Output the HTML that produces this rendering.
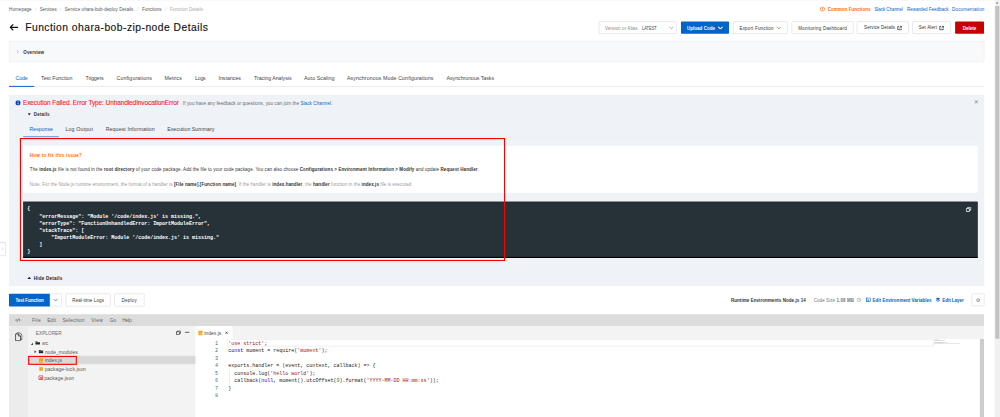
<!DOCTYPE html>
<html lang="en"><head><meta charset="utf-8"><title>Function Details</title>
<style>
html,body{margin:0;padding:0;background:#fff;overflow:hidden}
body{width:1000px;height:417px;position:relative;font-family:"Liberation Sans",sans-serif;color:#333}
#s{position:absolute;left:0;top:0;width:2667px;height:1112px;transform:scale(.375);transform-origin:0 0;overflow:hidden}
.t{position:absolute;white-space:pre;line-height:1;margin:0}
.m{font-family:"Liberation Mono",monospace}
.b{position:absolute;box-sizing:border-box;display:block}
b{font-weight:700}
.d{color:#333}
</style></head><body><div id="s">
<div class="b" style="left:0.00px;top:0.00px;width:2651.73px;height:3.20px;background:linear-gradient(#f3f3f3,#fff);"></div>
<svg class="b" style="left:24.53px;top:62.93px;width:24.53px;height:19.73px;" viewBox="0 0 25 20" preserveAspectRatio="none"><path d="M2.5 10 H24 M10.5 2 L2.5 10 L10.5 18" fill="none" stroke="#111" stroke-width="3.1"/></svg>
<svg class="b" style="left:2185.60px;top:16.80px;width:14.40px;height:14.40px;" viewBox="0 0 16 16" preserveAspectRatio="none"><circle cx="8" cy="8" r="6.3" fill="none" stroke="#ff6a00" stroke-width="2"/><path d="M8 4 V9.2 M8 10.6 V12.2" stroke="#ff6a00" stroke-width="2"/></svg>
<div class="b" style="left:1597.07px;top:56.80px;width:208.00px;height:32.80px;background:#fff;border:1px solid #c0c6cc;border-radius:2px;"></div>
<svg class="b" style="left:1783.73px;top:70.03px;width:12.80px;height:7.68px;" viewBox="0 0 16 8" preserveAspectRatio="none"><path d="M1 1 L8 7 L15 1" fill="none" stroke="#888" stroke-width="2.0"/></svg>
<div class="b" style="left:1816.00px;top:56.80px;width:128.00px;height:32.80px;background:#0064c8;border-radius:2px;"></div>
<svg class="b" style="left:1913.87px;top:69.63px;width:14.13px;height:8.48px;" viewBox="0 0 16 8" preserveAspectRatio="none"><path d="M1 1 L8 7 L15 1" fill="none" stroke="#fff" stroke-width="2.8"/></svg>
<div class="b" style="left:1954.67px;top:56.80px;width:145.33px;height:32.80px;background:#fff;border:1px solid #c0c6cc;border-radius:2px;"></div>
<svg class="b" style="left:2069.87px;top:69.87px;width:13.33px;height:8.00px;" viewBox="0 0 16 8" preserveAspectRatio="none"><path d="M1 1 L8 7 L15 1" fill="none" stroke="#666" stroke-width="2.0"/></svg>
<div class="b" style="left:2110.67px;top:56.80px;width:165.33px;height:32.80px;background:#fff;border:1px solid #c0c6cc;border-radius:2px;"></div>
<div class="b" style="left:2285.33px;top:56.80px;width:137.60px;height:32.80px;background:#fff;border:1px solid #c0c6cc;border-radius:2px;"></div>
<svg class="b" style="left:2391.87px;top:67.73px;width:13.60px;height:13.60px;" viewBox="0 0 16 16" preserveAspectRatio="none"><path d="M6.5 2.5 H2.5 V13.5 H13.5 V9.5" fill="none" stroke="#222" stroke-width="2.3"/><path d="M7.5 8.5 L13 3 M9 2 H14 V7" fill="none" stroke="#222" stroke-width="2.3"/></svg>
<div class="b" style="left:2432.53px;top:56.80px;width:102.40px;height:32.80px;background:#fff;border:1px solid #c0c6cc;border-radius:2px;"></div>
<svg class="b" style="left:2504.40px;top:67.73px;width:13.60px;height:13.60px;" viewBox="0 0 16 16" preserveAspectRatio="none"><path d="M6.5 2.5 H2.5 V13.5 H13.5 V9.5" fill="none" stroke="#222" stroke-width="2.3"/><path d="M7.5 8.5 L13 3 M9 2 H14 V7" fill="none" stroke="#222" stroke-width="2.3"/></svg>
<div class="b" style="left:2546.67px;top:56.80px;width:77.60px;height:32.80px;background:#c80000;border-radius:2px;"></div>
<div class="b" style="left:24.27px;top:108.80px;width:2600.80px;height:56.27px;background:#f7f9fa;border:1px solid #e3e4e6;border-radius:2px;"></div>
<svg class="b" style="left:45.07px;top:132.80px;width:5.33px;height:9.60px;" viewBox="0 0 8 16" preserveAspectRatio="none"><path d="M1.2 1.5 L6.5 8 L1.2 14.5" fill="none" stroke="#555" stroke-width="1.9"/></svg>
<div class="b" style="left:24.27px;top:230.40px;width:2600.80px;height:1.33px;background:#e3e4e6;"></div>
<div class="b" style="left:24.27px;top:228.80px;width:67.20px;height:2.93px;background:#2473d2;"></div>
<div class="b" style="left:24.27px;top:252.53px;width:2600.80px;height:510.13px;background:#eff3f8;"></div>
<svg class="b" style="left:40.80px;top:267.20px;width:14.13px;height:14.13px;" viewBox="0 0 16 16" preserveAspectRatio="none"><circle cx="8" cy="8" r="8" fill="#0a3ac4"/><path d="M8 3.4 V5.6 M8 7.2 V12.8" stroke="#fff" stroke-width="2.6"/></svg>
<svg class="b" style="left:2598.13px;top:266.40px;width:11.20px;height:11.20px;" viewBox="0 0 16 16" preserveAspectRatio="none"><path d="M2 2 L14 14 M14 2 L2 14" stroke="#444" stroke-width="2"/></svg>
<div class="b" style="left:74.1px;top:302.1px;width:0;height:0;border-left:4.6px solid transparent;border-right:4.6px solid transparent;border-top:6.5px solid #222"></div>
<div class="b" style="left:61.87px;top:365.33px;width:2544.80px;height:1.07px;background:#e3e7ec;"></div>
<div class="b" style="left:61.87px;top:362.93px;width:95.47px;height:3.47px;background:#6a9ee2;"></div>
<div class="b" style="left:61.87px;top:388.53px;width:2544.80px;height:125.60px;background:#fff;"></div>
<div class="b" style="left:61.87px;top:538.40px;width:2544.80px;height:149.33px;background:#263238;border:1.6px solid #0a0d0f;"></div>
<div class="b" style="left:61.87px;top:685.07px;width:2544.80px;height:2.67px;background:#000;"></div>
<svg class="b" style="left:2575.20px;top:550.93px;width:15.47px;height:14.93px;" viewBox="0 0 16 16" preserveAspectRatio="none"><rect x="1.8" y="5.5" width="8.7" height="8.7" rx="1" fill="none" stroke="#fff" stroke-width="2.3"/><path d="M5.5 5 V2.5 Q5.5 1.8 6.2 1.8 H13.5 Q14.2 1.8 14.2 2.5 V9.8 Q14.2 10.5 13.5 10.5 H11" fill="none" stroke="#fff" stroke-width="2.3"/></svg>
<div class="b" style="left:53.33px;top:368.00px;width:1293.60px;height:328.00px;border:3.4px solid #f00;"></div>
<div class="b" style="left:73.3px;top:738.4px;width:0;height:0;border-left:5px solid transparent;border-right:5px solid transparent;border-bottom:6.5px solid #222"></div>
<div class="b" style="left:-2.67px;top:646.67px;width:17.33px;height:34.93px;background:#fff;border:1.5px solid #d5d8dc;border-radius:0 3px 3px 0;box-shadow:0 0 3px rgba(0,0,0,.12);"></div>
<svg class="b" style="left:3.20px;top:658.13px;width:7.20px;height:11.47px;" viewBox="0 0 8 16" preserveAspectRatio="none"><path d="M1.2 1.2 L6.6 8 L1.2 14.8" fill="none" stroke="#bfc2c8" stroke-width="1.7"/></svg>
<div class="b" style="left:24.27px;top:783.47px;width:109.07px;height:33.33px;background:#0064c8;border-radius:2px 0 0 2px;"></div>
<div class="b" style="left:132.80px;top:783.47px;width:32.00px;height:33.33px;background:#fff;border:1px solid #c0c6cc;border-radius:0 2px 2px 0;"></div>
<svg class="b" style="left:142.40px;top:795.76px;width:12.80px;height:7.68px;" viewBox="0 0 16 8" preserveAspectRatio="none"><path d="M1 1 L8 7 L15 1" fill="none" stroke="#555" stroke-width="2.0"/></svg>
<div class="b" style="left:175.20px;top:783.47px;width:120.00px;height:33.33px;background:#fff;border:1px solid #c0c6cc;border-radius:2px;"></div>
<div class="b" style="left:304.53px;top:783.47px;width:80.80px;height:33.33px;background:#fff;border:1px solid #c0c6cc;border-radius:2px;"></div>
<svg class="b" style="left:2284.00px;top:793.33px;width:12.53px;height:12.53px;" viewBox="0 0 16 16" preserveAspectRatio="none"><circle cx="8" cy="8" r="6.3" fill="none" stroke="#909090" stroke-width="1.9"/><path d="M8 4.5 V8.5 H11" fill="none" stroke="#9a9a9a" stroke-width="1.8"/></svg>
<svg class="b" style="left:2308.80px;top:792.53px;width:13.07px;height:12.27px;" viewBox="0 0 16 16" preserveAspectRatio="none"><rect x="1.5" y="1.5" width="13" height="13" fill="none" stroke="#0064c8" stroke-width="2.4"/><path d="M4.5 5 L8 8.5 L11.5 5 M5 11.5 H11" fill="none" stroke="#0064c8" stroke-width="2"/></svg>
<svg class="b" style="left:2495.20px;top:793.07px;width:12.53px;height:12.53px;" viewBox="0 0 16 16" preserveAspectRatio="none"><path d="M8 0.5 L15.5 5 L8 9.5 L0.5 5 Z" fill="#0064c8"/><path d="M1 8.2 L8 12.4 L15 8.2 L15 10.6 L8 15 L1 10.6 Z" fill="#0064c8"/></svg>
<div class="b" style="left:2591.20px;top:783.20px;width:33.33px;height:32.80px;background:#fff;border:1px solid #c0c6cc;border-radius:2px;"></div>
<svg class="b" style="left:2602.93px;top:795.20px;width:10.67px;height:10.67px;" viewBox="0 0 16 16" preserveAspectRatio="none"><circle cx="8" cy="8" r="5.6" fill="none" stroke="#444" stroke-width="2.3"/></svg>
<div class="b" style="left:24.27px;top:837.87px;width:2599.47px;height:32.53px;background:#dcdcdc;"></div>
<div class="b" style="left:24.27px;top:870.40px;width:51.20px;height:249.60px;background:#ececec;"></div>
<div class="b" style="left:75.47px;top:870.40px;width:445.07px;height:249.60px;background:#f3f3f3;"></div>
<div class="b" style="left:520.53px;top:870.40px;width:2103.20px;height:33.33px;background:#f3f3f3;"></div>
<div class="b" style="left:520.53px;top:870.40px;width:99.20px;height:33.33px;background:#fff;"></div>
<svg class="b" style="left:40.27px;top:848.00px;width:15.47px;height:11.20px;" viewBox="0 0 16 16" preserveAspectRatio="none"><path d="M5 4.5 L1.5 8 L5 11.5 M11 4.5 L14.5 8 L11 11.5 M9.6 1.5 L6.4 14.5" fill="none" stroke="#6a6a6a" stroke-width="2.3"/></svg>
<svg class="b" style="left:39.73px;top:885.87px;width:20.27px;height:24.00px;" viewBox="0 0 20 24" preserveAspectRatio="none"><path d="M5 4 V1.5 H13 L18.5 7 V19 H15" fill="none" stroke="#333" stroke-width="2"/><path d="M1.5 4.5 H9 L14.5 10 V22.5 H1.5 Z M9 4.5 V10 H14.5" fill="none" stroke="#333" stroke-width="2"/></svg>
<svg class="b" style="left:469.33px;top:880.53px;width:13.33px;height:12.27px;" viewBox="0 0 16 16" preserveAspectRatio="none"><rect x="1.5" y="5" width="9.5" height="9.5" fill="none" stroke="#333" stroke-width="2.2"/><path d="M5 5 V1.5 H14.5 V11 H11" fill="none" stroke="#333" stroke-width="2.2"/></svg>
<div class="b" style="left:493.33px;top:885.33px;width:11.20px;height:2.13px;background:#333;"></div>
<div class="b" style="left:75.47px;top:949.07px;width:445.07px;height:22.13px;background:#d9d9d9;"></div>
<div class="b" style="left:81.6px;top:913.5px;width:0;height:0;border-left:6px solid transparent;border-bottom:6px solid #444"></div>
<svg class="b" style="left:94.40px;top:910.40px;width:12.53px;height:9.60px;" viewBox="0 0 16 16" preserveAspectRatio="none"><path d="M0 0.5 H6.5 L8 3 H16 V15 H0 Z" fill="#222"/><path d="M0 5.2 H16" stroke="#f3f3f3" stroke-width="1"/></svg>
<div class="b" style="left:91.5px;top:934.3px;width:0;height:0;border-top:4px solid transparent;border-bottom:4px solid transparent;border-left:5px solid #444"></div>
<svg class="b" style="left:103.47px;top:933.20px;width:12.53px;height:9.60px;" viewBox="0 0 16 16" preserveAspectRatio="none"><path d="M0 0.5 H6.5 L8 3 H16 V15 H0 Z" fill="#222"/><path d="M0 5.2 H16" stroke="#f3f3f3" stroke-width="1"/></svg>
<div class="b" style="left:103.73px;top:954.93px;width:11.47px;height:12.00px;background:#f5a118;border-radius:1px;"></div>
<div class="b" style="left:105.33px;top:978.53px;width:3.47px;height:10.40px;background:#f09a10;"></div>
<div class="b" style="left:110.40px;top:978.53px;width:3.47px;height:10.40px;background:#f09a10;"></div>
<div class="b" style="left:102.93px;top:1000.80px;width:11.73px;height:11.73px;background:#fff;border:2.2px solid #cc3e44;border-radius:1.5px;"></div>
<div class="b" style="left:106.67px;top:1005.87px;width:5.07px;height:3.73px;background:#cc3e44;"></div>
<div class="b" style="left:74.67px;top:948.53px;width:130.13px;height:24.00px;border:3.1px solid #f00;"></div>
<div class="b" style="left:528.53px;top:881.60px;width:11.20px;height:12.80px;background:#f5a623;border-radius:1px;"></div>
<svg class="b" style="left:600.00px;top:883.20px;width:8.53px;height:8.53px;" viewBox="0 0 16 16" preserveAspectRatio="none"><path d="M2 2 L14 14 M14 2 L2 14" stroke="#222" stroke-width="3.2"/></svg>
<div class="b" style="left:606.40px;top:904.80px;width:1882.40px;height:19.47px;border:2px solid #eaeaea;"></div>
<div class="b" style="left:611.47px;top:984.81px;width:0.80px;height:40.08px;background:#d3d3d3;"></div>
<div class="b" style="left:2490.67px;top:905.60px;width:13.33px;height:1.20px;background:#c99;"></div>
<div class="b" style="left:2490.67px;top:907.60px;width:29.33px;height:1.20px;background:#aab;"></div>
<div class="b" style="left:2490.67px;top:911.60px;width:37.33px;height:1.20px;background:#bbb;"></div>
<div class="b" style="left:2490.67px;top:913.60px;width:24.00px;height:1.20px;background:#caa;"></div>
<div class="b" style="left:2490.67px;top:915.60px;width:69.33px;height:1.20px;background:#cbb;"></div>
<div class="b" style="left:2490.67px;top:917.60px;width:2.67px;height:1.20px;background:#bbb;"></div>
<div class="b" style="left:2613.33px;top:904.00px;width:10.67px;height:216.00px;background:#cdcdcd;"></div>
<div class="b" style="left:2651.73px;top:0.00px;width:15.47px;height:1120.00px;background:#f1f1f1;"></div>
<div class="b" style="left:2653.60px;top:16.00px;width:11.47px;height:886.67px;background:#c1c1c1;"></div>
<div class="b" style="left:2656.0px;top:4.8px;width:0;height:0;border-left:3.5px solid transparent;border-right:3.5px solid transparent;border-bottom:4.5px solid #505050"></div>
<div class="t" style="left:24.27px;top:19.79px;font-size:12px;color:#555;letter-spacing:0.193px;">Homepage</div>
<div class="t" style="left:94.13px;top:19.79px;font-size:12px;color:#ccc;">/</div>
<div class="t" style="left:106.13px;top:19.79px;font-size:12px;color:#555;letter-spacing:-0.152px;">Services</div>
<div class="t" style="left:160.00px;top:19.79px;font-size:12px;color:#ccc;">/</div>
<div class="t" style="left:172.80px;top:19.79px;font-size:12px;color:#555;letter-spacing:0.172px;">Service ohara-bob-deploy Details</div>
<div class="t" style="left:366.13px;top:19.79px;font-size:12px;color:#ccc;">/</div>
<div class="t" style="left:378.67px;top:19.79px;font-size:12px;color:#555;">Functions</div>
<div class="t" style="left:440.53px;top:19.79px;font-size:12px;color:#ccc;">/</div>
<div class="t" style="left:453.07px;top:19.79px;font-size:12px;color:#aaa;letter-spacing:0.139px;">Function Details</div>
<div class="t" style="left:67.20px;top:59.32px;font-size:27.5px;color:#141414;letter-spacing:1.241px;-webkit-text-stroke:0.4px #141414;">Function ohara-bob-zip-node Details</div>
<div class="t" style="left:2207.20px;top:18.45px;font-size:12px;color:#ff6a00;font-weight:700;letter-spacing:0.091px;">Common Functions</div>
<div class="t" style="left:2331.73px;top:18.45px;font-size:12px;color:#0064c8;letter-spacing:-0.148px;">Slack Channel</div>
<div class="t" style="left:2418.40px;top:18.45px;font-size:12px;color:#0064c8;">Rewarded Feedback</div>
<div class="t" style="left:2538.93px;top:18.45px;font-size:12px;color:#0064c8;letter-spacing:0.437px;">Documentation</div>
<div class="t" style="left:1613.60px;top:69.25px;font-size:12px;color:#888;letter-spacing:0.230px;">Version or Alias</div>
<div class="t" style="left:1712.27px;top:69.25px;font-size:12px;color:#444;transform:scaleX(.885);transform-origin:0 50%;">LATEST</div>
<div class="t" style="left:1832.00px;top:69.25px;font-size:12px;color:#fff;font-weight:700;letter-spacing:0.061px;">Upload Code</div>
<div class="t" style="left:1972.00px;top:69.25px;font-size:12px;color:#333;letter-spacing:0.459px;">Export Function</div>
<div class="t" style="left:2128.80px;top:69.25px;font-size:12px;color:#333;letter-spacing:0.576px;">Monitoring Dashboard</div>
<div class="t" style="left:2304.27px;top:68.19px;font-size:12px;color:#333;letter-spacing:0.193px;">Service Details</div>
<div class="t" style="left:2450.13px;top:68.19px;font-size:12px;color:#333;letter-spacing:0.382px;">Set Alert</div>
<div class="t" style="left:2567.20px;top:68.59px;font-size:12px;color:#fff;font-weight:700;letter-spacing:0.084px;">Delete</div>
<div class="t" style="left:62.13px;top:132.85px;font-size:12px;color:#333;font-weight:700;letter-spacing:0.295px;">Overview</div>
<div class="t" style="left:41.33px;top:201.31px;font-size:14px;color:#0064c8;letter-spacing:-0.367px;">Code</div>
<div class="t" style="left:109.33px;top:201.31px;font-size:14px;color:#444;letter-spacing:0.056px;">Test Function</div>
<div class="t" style="left:228.00px;top:201.31px;font-size:14px;color:#444;letter-spacing:-0.354px;">Triggers</div>
<div class="t" style="left:310.67px;top:201.31px;font-size:14px;color:#444;letter-spacing:0.313px;">Configurations</div>
<div class="t" style="left:438.67px;top:201.31px;font-size:14px;color:#444;letter-spacing:0.220px;">Metrics</div>
<div class="t" style="left:520.00px;top:201.31px;font-size:14px;color:#444;letter-spacing:-0.590px;">Logs</div>
<div class="t" style="left:582.67px;top:201.31px;font-size:14px;color:#444;">Instances</div>
<div class="t" style="left:677.33px;top:201.31px;font-size:14px;color:#444;letter-spacing:-0.089px;">Tracing Analysis</div>
<div class="t" style="left:810.67px;top:201.31px;font-size:14px;color:#444;letter-spacing:0.227px;">Auto Scaling</div>
<div class="t" style="left:925.33px;top:201.31px;font-size:14px;color:#444;letter-spacing:0.277px;">Asynchronous Mode Configurations</div>
<div class="t" style="left:1190.67px;top:201.31px;font-size:14px;color:#444;letter-spacing:-0.082px;">Asynchronous Tasks</div>
<div class="t" style="left:61.07px;top:265.30px;font-size:17.5px;color:#f21d1d;letter-spacing:-0.330px;-webkit-text-stroke:0.25px #f21d1d;">Execution Failed. Error Type: UnhandledInvocationError</div>
<div class="t" style="left:487.47px;top:269.12px;font-size:12px;color:#666;letter-spacing:0.310px;">If you have any feedback or questions, you can join the <span style="color:#0064c8">Slack Channel</span>.</div>
<div class="t" style="left:90.13px;top:299.52px;font-size:12px;color:#333;font-weight:700;letter-spacing:0.472px;">Details</div>
<div class="t" style="left:78.67px;top:336.51px;font-size:14px;color:#0064c8;letter-spacing:-0.048px;">Response</div>
<div class="t" style="left:174.40px;top:336.51px;font-size:14px;color:#444;letter-spacing:0.459px;">Log Output</div>
<div class="t" style="left:281.87px;top:336.51px;font-size:14px;color:#444;letter-spacing:0.256px;">Request Information</div>
<div class="t" style="left:445.87px;top:336.51px;font-size:14px;color:#444;letter-spacing:0.034px;">Execution Summary</div>
<div class="t" style="left:79.47px;top:407.79px;font-size:12px;color:#ff6a00;font-weight:700;letter-spacing:0.720px;">How to fix this issue?</div>
<div class="t" style="left:79.47px;top:445.65px;font-size:12px;color:#333;letter-spacing:0.237px;">The <b>index.js</b> file is not found in the <b>root directory</b> of your code package. Add the file to your code package. You can also choose <b>Configurations &gt; Environment Information &gt; Modify</b> and update <b>Request Handler</b>.</div>
<div class="t" style="left:79.47px;top:484.85px;font-size:12px;color:#999;letter-spacing:0.211px;">Note: For the Node.js runtime environment, the format of a handler is <b class="d">[File name].[Function name]</b>. If the handler is <b class="d">index.handler</b>, the <b class="d">handler</b> function in the <b class="d">index.js</b> file is executed.</div>
<div class="t m" style="left:72.53px;top:551.17px;font-size:13.4px;color:#fff;font-weight:700;letter-spacing:-0.04px;">{</div>
<div class="t m" style="left:72.53px;top:570.16px;font-size:13.4px;color:#fff;font-weight:700;letter-spacing:-0.04px;">    &quot;errorMessage&quot;: &quot;Module '/code/index.js' is missing.&quot;,</div>
<div class="t m" style="left:72.53px;top:589.14px;font-size:13.4px;color:#fff;font-weight:700;letter-spacing:-0.04px;">    &quot;errorType&quot;: &quot;FunctionUnhandledError: ImportModuleError&quot;,</div>
<div class="t m" style="left:72.53px;top:608.13px;font-size:13.4px;color:#fff;font-weight:700;letter-spacing:-0.04px;">    &quot;stackTrace&quot;: [</div>
<div class="t m" style="left:72.53px;top:627.12px;font-size:13.4px;color:#fff;font-weight:700;letter-spacing:-0.04px;">        &quot;ImportModuleError: Module '/code/index.js' is missing.&quot;</div>
<div class="t m" style="left:72.53px;top:646.10px;font-size:13.4px;color:#fff;font-weight:700;letter-spacing:-0.04px;">    ]</div>
<div class="t m" style="left:72.53px;top:665.09px;font-size:13.4px;color:#fff;font-weight:700;letter-spacing:-0.04px;">}</div>
<div class="t" style="left:90.13px;top:736.85px;font-size:12px;color:#222;font-weight:700;letter-spacing:0.653px;">Hide Details</div>
<div class="t" style="left:41.07px;top:795.25px;font-size:12px;color:#fff;font-weight:700;letter-spacing:-0.158px;">Test Function</div>
<div class="t" style="left:192.80px;top:795.25px;font-size:12px;color:#333;letter-spacing:0.274px;">Real-time Logs</div>
<div class="t" style="left:324.27px;top:795.25px;font-size:12px;color:#333;letter-spacing:0.618px;">Deploy</div>
<div class="t" style="left:1949.07px;top:793.92px;font-size:12px;color:#333;font-weight:700;letter-spacing:0.162px;">Runtime Environments Node.js 14</div>
<div class="t" style="left:2169.87px;top:793.92px;font-size:12px;color:#777;letter-spacing:0.216px;">Code Size <b>1.08 MB</b></div>
<div class="t" style="left:2326.67px;top:794.45px;font-size:12px;color:#0064c8;font-weight:700;letter-spacing:0.085px;">Edit Environment Variables</div>
<div class="t" style="left:2512.53px;top:794.45px;font-size:12px;color:#0064c8;font-weight:700;letter-spacing:-0.043px;">Edit Layer</div>
<div class="t" style="left:85.07px;top:846.55px;font-size:13px;color:#646464;letter-spacing:0.828px;">File</div>
<div class="t" style="left:126.13px;top:846.55px;font-size:13px;color:#646464;letter-spacing:0.198px;">Edit</div>
<div class="t" style="left:166.67px;top:846.55px;font-size:13px;color:#646464;letter-spacing:0.635px;">Selection</div>
<div class="t" style="left:243.47px;top:846.55px;font-size:13px;color:#646464;letter-spacing:0.812px;">View</div>
<div class="t" style="left:292.53px;top:846.55px;font-size:13px;color:#646464;letter-spacing:0.128px;">Go</div>
<div class="t" style="left:326.13px;top:846.55px;font-size:13px;color:#646464;letter-spacing:-0.621px;">Help</div>
<div class="t" style="left:95.47px;top:881.57px;font-size:12.8px;color:#6e6e6e;letter-spacing:-0.080px;">EXPLORER</div>
<div class="t" style="left:111.73px;top:909.75px;font-size:13px;color:#555;letter-spacing:-0.359px;">src</div>
<div class="t" style="left:119.73px;top:932.55px;font-size:13px;color:#555;letter-spacing:0.203px;">node_modules</div>
<div class="t" style="left:106.93px;top:959.01px;font-size:6.5px;color:#fde3b5;font-weight:700;">JS</div>
<div class="t" style="left:119.73px;top:955.35px;font-size:13px;color:#555;letter-spacing:0.190px;">index.js</div>
<div class="t" style="left:119.73px;top:978.15px;font-size:13px;color:#555;letter-spacing:0.294px;">package-lock.json</div>
<div class="t" style="left:117.87px;top:1000.95px;font-size:13px;color:#555;letter-spacing:0.237px;">package.json</div>
<div class="t" style="left:531.73px;top:885.94px;font-size:6.5px;color:#fde3b5;font-weight:700;">JS</div>
<div class="t" style="left:544.53px;top:881.21px;font-size:13px;color:#444;letter-spacing:0.224px;">index.js</div>
<div class="t m" style="left:573.33px;top:908.78px;font-size:13.37px;color:#237893;">1</div>
<div class="t m" style="left:608.53px;top:908.78px;font-size:13.37px;color:#222;"><span style="color:#a31515">'use strict'</span>;</div>
<div class="t m" style="left:573.33px;top:928.82px;font-size:13.37px;color:#237893;">2</div>
<div class="t m" style="left:608.53px;top:928.82px;font-size:13.37px;color:#222;"><span style="color:#0000ff">const</span> moment = require(<span style="color:#a31515">'moment'</span>);</div>
<div class="t m" style="left:573.33px;top:948.86px;font-size:13.37px;color:#237893;">3</div>
<div class="t m" style="left:573.33px;top:968.90px;font-size:13.37px;color:#237893;">4</div>
<div class="t m" style="left:608.53px;top:968.90px;font-size:13.37px;color:#222;">exports.handler = (event, context, callback) =&gt; {</div>
<div class="t m" style="left:573.33px;top:988.94px;font-size:13.37px;color:#237893;">5</div>
<div class="t m" style="left:608.53px;top:988.94px;font-size:13.37px;color:#222;">  console.log(<span style="color:#a31515">'hello world'</span>);</div>
<div class="t m" style="left:573.33px;top:1008.98px;font-size:13.37px;color:#237893;">6</div>
<div class="t m" style="left:608.53px;top:1008.98px;font-size:13.37px;color:#222;">  callback(<span style="color:#0000ff">null</span>, moment().utcOffset(<span style="color:#098658">9</span>).format(<span style="color:#a31515">'YYYY-MM-DD HH:mm:ss'</span>));</div>
<div class="t m" style="left:573.33px;top:1029.02px;font-size:13.37px;color:#237893;">7</div>
<div class="t m" style="left:608.53px;top:1029.02px;font-size:13.37px;color:#222;">}</div>
<div class="t m" style="left:573.33px;top:1049.06px;font-size:13.37px;color:#237893;">8</div>
</div></body></html>
